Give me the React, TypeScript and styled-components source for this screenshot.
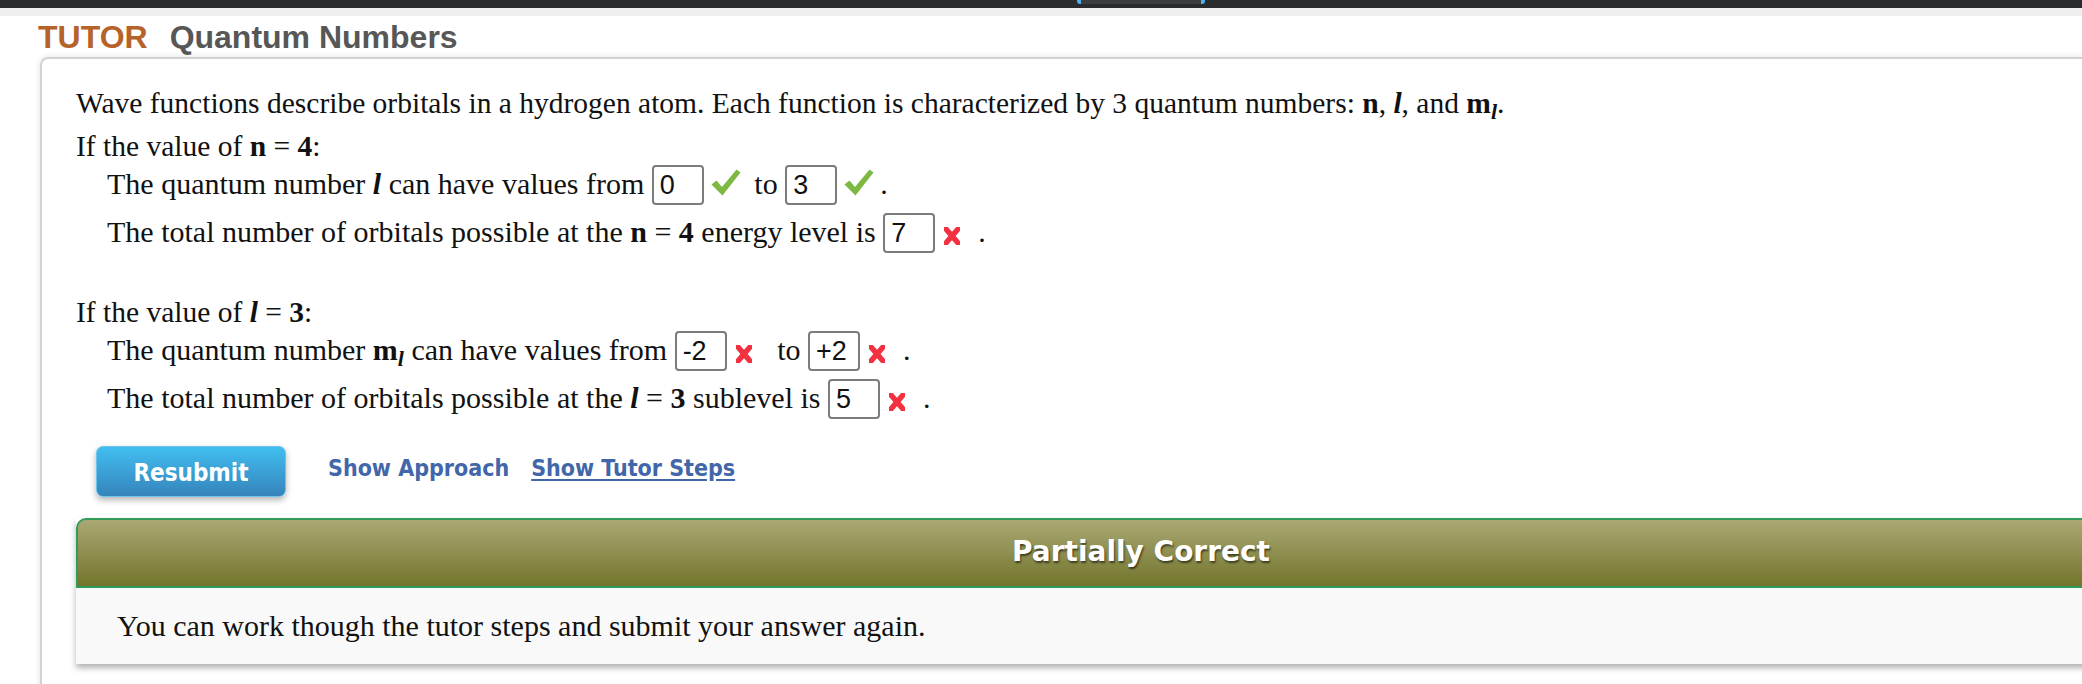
import { FC, ReactNode } from "react";
import styled, { createGlobalStyle } from "styled-components";

const GlobalStyle = createGlobalStyle`
  html, body {
    margin: 0;
    padding: 0;
    background: #fff;
    overflow: hidden;
  }
`;

const CheckIcon: FC = () => (
  <IconSlot>
    <svg width="30" height="27" viewBox="0 0 30 27">
      <path d="M0.5 15.5 L5.5 11.5 L11 18 L25.5 0.5 L29.5 3.5 L11.5 26.5 Z" fill="#7db843" />
    </svg>
  </IconSlot>
);

const CrossIcon: FC = () => (
  <IconSlot $down={4}>
    <svg width="30" height="20" viewBox="0 0 30 20">
      <g stroke="#f23240" strokeWidth="5.5" strokeLinecap="round" filter="url(#soft)">
        <line x1="4" y1="3" x2="16" y2="17" />
        <line x1="16" y1="3" x2="4" y2="17" />
      </g>
      <defs>
        <filter id="soft">
          <feGaussianBlur stdDeviation="0.6" />
        </filter>
      </defs>
    </svg>
  </IconSlot>
);

type AnswerProps = { value: string; correct: boolean; tail?: ReactNode };

const Answer: FC<AnswerProps> = ({ value, correct, tail }) => (
  <>
    <AnswerBox>{value}</AnswerBox>
    {correct ? <CheckIcon /> : <CrossIcon />}
    {tail}
  </>
);

const Ml: FC = () => (
  <b>
    m<Sub>l</Sub>
  </b>
);

const App: FC = () => {
  return (
    <>
      <GlobalStyle />
      <TopBar>
        <TopTab />
      </TopBar>
      <GrayBand />
      <TitleBar>
        <TutorLabel>TUTOR</TutorLabel>
        <TitleText>Quantum Numbers</TitleText>
      </TitleBar>
      <Card>
        <TextLine>
          Wave functions describe orbitals in a hydrogen atom. Each function is characterized by 3 quantum numbers:{" "}
          <b>n</b>, <BoldItalic>l</BoldItalic>, and <Ml />.
        </TextLine>
        <TextLine $top={15}>
          If the value of <b>n</b> = <b>4</b>:
        </TextLine>
        <SubRows>
          <AnswerRow>
            The quantum number <BoldItalic>l</BoldItalic> can have values from <Answer value="0" correct /> to{" "}
            <Answer value="3" correct />.
          </AnswerRow>
          <AnswerRow>
            The total number of orbitals possible at the <b>n</b> = <b>4</b> energy level is{" "}
            <Answer value="7" correct={false} />.
          </AnswerRow>
        </SubRows>
        <TextLine $top={42}>
          If the value of <BoldItalic>l</BoldItalic> = <b>3</b>:
        </TextLine>
        <SubRows>
          <AnswerRow>
            The quantum number <Ml /> can have values from <Answer value="-2" correct={false} /> to{" "}
            <Answer value="+2" correct={false} />.
          </AnswerRow>
          <AnswerRow>
            The total number of orbitals possible at the <BoldItalic>l</BoldItalic> = <b>3</b> sublevel is{" "}
            <Answer value="5" correct={false} />.
          </AnswerRow>
        </SubRows>
        <Actions>
          <ResubmitButton>Resubmit</ResubmitButton>
          <LinkRow>
            <ActionLink>Show Approach</ActionLink>
            <ActionLink $underline>Show Tutor Steps</ActionLink>
          </LinkRow>
        </Actions>
        <Feedback>
          <FeedbackHeader>Partially Correct</FeedbackHeader>
          <FeedbackBody>You can work though the tutor steps and submit your answer again.</FeedbackBody>
        </Feedback>
      </Card>
    </>
  );
};

const TopBar = styled.div`
  height: 8px;
  background: #2a2b2d;
  display: flex;
`;

const TopTab = styled.div`
  margin-left: 1077px;
  width: 128px;
  height: 4px;
  background: #3b3d41;
  border-left: 4px solid #4fb0ea;
  border-right: 4px solid #4fb0ea;
  border-radius: 0 0 3px 3px;
  box-sizing: border-box;
`;

const GrayBand = styled.div`
  height: 8px;
  background: #efefef;
`;

const TitleBar = styled.div`
  height: 41px;
  box-sizing: border-box;
  padding: 1px 0 0 38px;
  display: flex;
  align-items: center;
  gap: 22px;
  font-family: "Liberation Sans", Arial, sans-serif;
  font-weight: bold;
  font-size: 32px;
  line-height: 40px;
`;

const TutorLabel = styled.span`
  color: #b5632a;
`;

const TitleText = styled.span`
  color: #575757;
`;

const Card = styled.div`
  margin-left: 40px;
  width: 2164px;
  min-height: 640px;
  box-sizing: border-box;
  border-top: 2px solid #d2d2d2;
  border-left: 2px solid #d2d2d2;
  border-top-left-radius: 8px;
  box-shadow: 0 0 6px rgba(0, 0, 0, 0.12);
  padding: 30px 0 0 34px;
  font-family: "Liberation Serif", "Times New Roman", serif;
  font-size: 29.5px;
  color: #111;
`;

const TextLine = styled.div<{ $top?: number }>`
  line-height: 28px;
  margin-top: ${({ $top }) => $top ?? 0}px;
  white-space: nowrap;
`;

const SubRows = styled.div`
  padding-left: 31px;
`;

const AnswerRow = styled.div`
  font-size: 30px;
  line-height: 48px;
  white-space: nowrap;
`;

const BoldItalic = styled.b`
  font-style: italic;
`;

const Sub = styled.sub`
  font-style: italic;
  font-size: 22px;
  line-height: 0;
  vertical-align: -6px;
`;

const AnswerBox = styled.span`
  display: inline-block;
  box-sizing: border-box;
  width: 52px;
  height: 40px;
  border: 2px solid #7c7c7c;
  border-radius: 4px;
  padding-left: 6px;
  font-family: "Liberation Sans", Arial, sans-serif;
  font-size: 27px;
  line-height: 36px;
  color: #111;
  text-align: left;
  background: #fff;
`;

const IconSlot = styled.span<{ $down?: number }>`
  display: inline-block;
  width: 30px;
  margin: 0 6px 0 7px;
  vertical-align: ${({ $down }) => -($down ?? 2)}px;
  line-height: 0;
`;

const Actions = styled.div`
  display: flex;
  align-items: flex-start;
  margin: 24px 0 0 20px;
  gap: 42px;
`;

const ResubmitButton = styled.button`
  width: 190px;
  height: 51px;
  box-sizing: border-box;
  border: 1px solid #6cc4ee;
  border-radius: 7px;
  background: linear-gradient(to bottom, #41bef0, #3584bb);
  box-shadow: 0 3px 6px rgba(0, 0, 0, 0.3);
  color: #fff;
  font-family: "DejaVu Sans", Verdana, sans-serif;
  font-stretch: condensed;
  font-weight: bold;
  font-size: 24px;
  padding: 3px 0 0;
  cursor: pointer;
`;

const LinkRow = styled.div`
  display: flex;
  gap: 22px;
  margin-top: 9px;
`;

const ActionLink = styled.a<{ $underline?: boolean }>`
  font-family: "DejaVu Sans", Verdana, sans-serif;
  font-stretch: condensed;
  font-weight: bold;
  font-size: 23px;
  line-height: 27px;
  color: #4166a9;
  text-decoration: ${({ $underline }) => ($underline ? "underline" : "none")};
  text-underline-offset: 3px;
  cursor: pointer;
`;

const Feedback = styled.div`
  margin-top: 21px;
  box-shadow: 0 4px 6px rgba(0, 0, 0, 0.3);
`;

const FeedbackHeader = styled.div`
  height: 70px;
  box-sizing: border-box;
  border: 2px solid #2f9c5a;
  border-right: none;
  border-top-left-radius: 10px;
  background: linear-gradient(to bottom, #aaa874, #72752b);
  color: #fff;
  text-align: center;
  font-family: "DejaVu Sans", Verdana, sans-serif;
  font-weight: bold;
  font-size: 28px;
  line-height: 64px;
  text-shadow: 1px 2px 2px rgba(0, 0, 0, 0.55);
`;

const FeedbackBody = styled.div`
  height: 76px;
  background: #f9f9f9;
  padding-left: 41px;
  font-size: 30px;
  line-height: 76px;
  color: #111;
`;

export default App;
